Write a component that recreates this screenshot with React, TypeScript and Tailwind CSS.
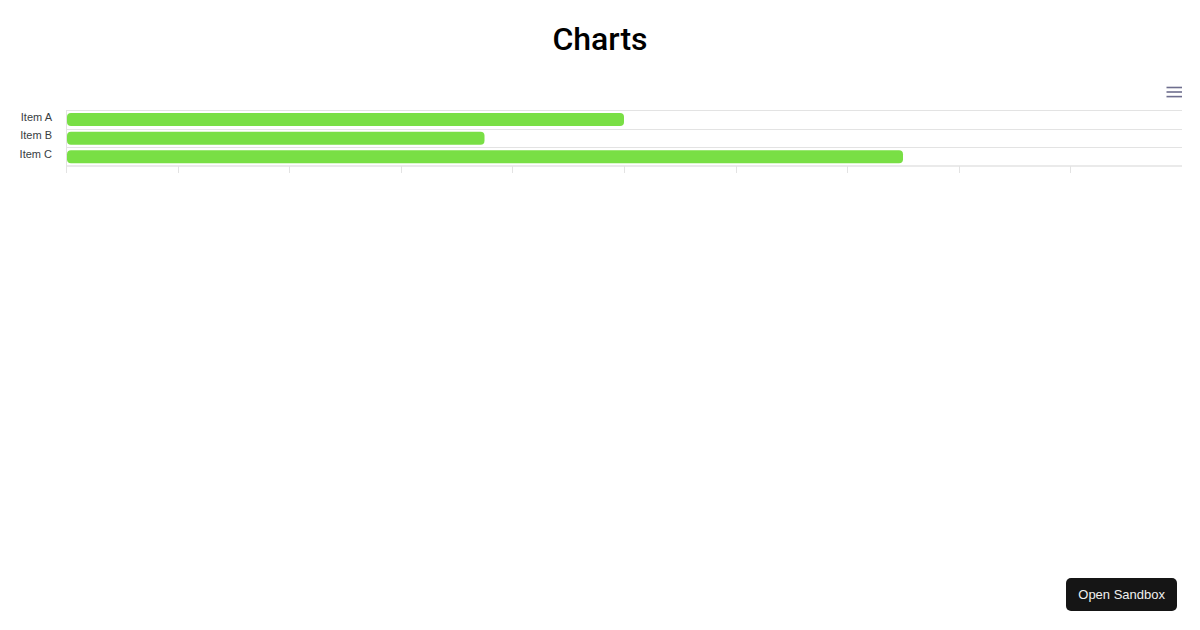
import React from "react";

const data = [
  { label: "Item A", value: 40 },
  { label: "Item B", value: 30 },
  { label: "Item C", value: 60 },
];

export default function App() {
  const x0 = 66;
  const x1 = 1182;
  const w = x1 - x0;
  const max = 80;
  const rows = [30, 48.67, 67.33];
  const labelY = [41, 59, 78];
  const ticks = Array.from({ length: 10 }, (_, i) => x0 + (i * w) / 10);
  return (
    <div className="relative w-full h-[630px] bg-white overflow-hidden">
      <h1 className="pt-[15px] text-center text-[32px] leading-[48px] font-medium text-black [font-family:Roboto,'Liberation_Sans',sans-serif]">
        Charts
      </h1>
      <svg
        className="block mt-[17px]"
        width="1200"
        height="100"
        viewBox="0 0 1200 100"
      >
        <g stroke="#6e6e8e" strokeWidth="1.6">
          <line x1="1166.5" y1="7.5" x2="1182" y2="7.5" />
          <line x1="1166.5" y1="12" x2="1182" y2="12" />
          <line x1="1166.5" y1="16.6" x2="1182" y2="16.6" />
        </g>
        <g stroke="#e3e3e3" strokeWidth="1">
          {[30.5, 49.5, 67.5, 86].map((y) => (
            <line key={y} x1={x0} y1={y} x2={x1} y2={y} strokeWidth={y === 86 ? 1.6 : 1} />
          ))}
          <line x1={x0 + 0.5} y1="30" x2={x0 + 0.5} y2="93" />
          {ticks.map((t) => (
            <line key={t} x1={Math.round(t) + 0.5} y1="86" x2={Math.round(t) + 0.5} y2="93" />
          ))}
        </g>
        {data.map((d, i) => (
          <rect
            key={d.label}
            x={x0 + 1}
            y={rows[i] + 3}
            width={(d.value / max) * w - 1}
            height="13"
            rx="4"
            fill="#79df45"
          />
        ))}
        {data.map((d, i) => (
          <text
            key={d.label}
            x="52"
            y={labelY[i]}
            textAnchor="end"
            fontSize="11"
            fill="#373d3f"
            fontFamily="'Liberation Sans', Arial, sans-serif"
          >
            {d.label}
          </text>
        ))}
      </svg>
      <button className="absolute right-[23px] bottom-[19px] h-[33px] px-[12px] rounded-[5px] bg-[#151515] text-[13px] text-[#f0f0f0] [font-family:'Liberation_Sans',Arial,sans-serif]">
        Open Sandbox
      </button>
    </div>
  );
}
